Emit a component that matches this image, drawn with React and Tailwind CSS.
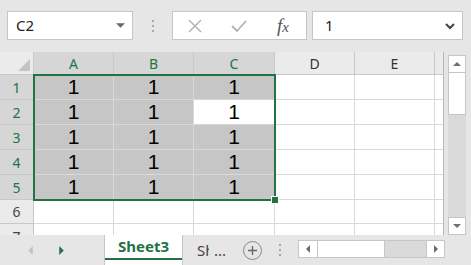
import React from "react";

const cols = [
  { label: "A", w: "w-[80px]", sel: true },
  { label: "B", w: "w-[80px]", sel: true },
  { label: "C", w: "w-[81px]", sel: true },
  { label: "D", w: "w-[80px]", sel: false },
  { label: "E", w: "w-[80px]", sel: false },
  { label: "", w: "w-[9px]", sel: false },
];

const rows = [1, 2, 3, 4, 5, 6, 7];

const Dots = () => (
  <div className="flex flex-col gap-[3px]">
    <div className="w-[2px] h-[2px] bg-[#a6a6a6]" />
    <div className="w-[2px] h-[2px] bg-[#a6a6a6]" />
    <div className="w-[2px] h-[2px] bg-[#a6a6a6]" />
  </div>
);

const Tri = ({ dir, color = "#6e6e6e", size = 8 }) => {
  const pts = {
    up: "0,6 4,2 8,6",
    down: "0,2 8,2 4,6",
    left: "6,0 6,8 2,4",
    right: "2,0 2,8 6,4",
  };
  return (
    <svg width={size} height={size} viewBox="0 0 8 8">
      <polygon points={pts[dir]} fill={color} />
    </svg>
  );
};

const Row = ({ n }) => {
  const selRow = n <= 5;
  const h = n === 6 ? "h-[24px]" : "h-[25px]";
  return (
    <div className={`flex ${h} shrink-0`}>
      <div
        className={`w-[34px] shrink-0 flex items-center justify-center border-r border-b border-[#c8c8c8] text-[14px] ${
          selRow ? "bg-[#d6d6d6] text-[#217346]" : "bg-[#ebebeb] text-[#444]"
        }`}
      >
        {n}
      </div>
      {cols.map((c, i) => {
        const selCell = selRow && c.sel;
        const active = n === 2 && i === 2;
        return (
          <div
            key={i}
            className={`${c.w} shrink-0 flex items-center justify-center border-r border-b border-[#d9d9d9] ${
              selCell && !active ? "bg-[#c6c6c6]" : "bg-white"
            } text-black text-[21px] font-['Liberation_Sans',Arial,sans-serif]`}
          >
            {selCell ? "1" : ""}
          </div>
        );
      })}
    </div>
  );
};

export default function App() {
  return (
    <div className="w-[471px] h-[265px] overflow-hidden bg-[#e6e6e6] font-['Noto_Sans',Arial,sans-serif] flex flex-col">
      {/* formula bar */}
      <div className="h-[52px] shrink-0 flex items-start pt-[11px] pl-[7px]">
        <div className="w-[126px] h-[29px] bg-white border border-[#c6c6c6] flex items-center justify-between pl-[8px] pr-[7px]">
          <span className="text-[15px] text-[#222]">C2</span>
          <Tri dir="down" color="#6a6a6a" size={9} />
        </div>
        <div className="w-[39px] h-[29px] flex items-center justify-center">
          <Dots />
        </div>
        <div className="w-[135px] h-[29px] bg-white border border-[#c6c6c6] flex items-center">
          <div className="w-[44px] flex justify-center">
            <svg width="14" height="14" viewBox="0 0 14 14">
              <path d="M1 1 L13 13 M13 1 L1 13" stroke="#b3b3b3" strokeWidth="1.5" />
            </svg>
          </div>
          <div className="w-[44px] flex justify-center">
            <svg width="16" height="14" viewBox="0 0 16 14">
              <path d="M1 7 L6 12 L15 2" stroke="#b3b3b3" strokeWidth="1.8" fill="none" />
            </svg>
          </div>
          <div className="w-[44px] flex justify-center">
            <span className="font-['Liberation_Serif',serif] italic text-[19px] leading-none text-[#555]">
              f<span className="text-[15px]">x</span>
            </span>
          </div>
        </div>
        <div className="ml-[5px] w-[151px] h-[29px] bg-white border border-[#c6c6c6] flex items-center justify-between pl-[12px] pr-[7px]">
          <span className="text-[15px] text-[#222]">1</span>
          <svg width="10" height="8" viewBox="0 0 10 8">
            <path d="M1 2 L5 6 L9 2" stroke="#444" strokeWidth="2" fill="none" />
          </svg>
        </div>
      </div>

      {/* grid + vertical scrollbar */}
      <div className="flex h-[183px] shrink-0">
        <div className="relative w-[444px] shrink-0 overflow-hidden border-r border-[#b8b8b8]">
          <div className="flex h-[23px]">
            <div className="w-[34px] shrink-0 bg-[#ebebeb] border-r border-b border-[#c8c8c8] flex items-end justify-end p-[3px]">
              <svg width="12" height="12" viewBox="0 0 12 12">
                <polygon points="0,12 12,12 12,0" fill="#c4c4c4" />
              </svg>
            </div>
            {cols.map((c, i) => (
              <div
                key={i}
                className={`${c.w} shrink-0 flex items-center justify-center border-r border-b border-[#c8c8c8] text-[14px] ${
                  c.sel ? "bg-[#d6d6d6] text-[#217346]" : "bg-[#ebebeb] text-[#333]"
                }`}
              >
                {c.label}
              </div>
            ))}
          </div>
          {rows.map((n) => (
            <Row key={n} n={n} />
          ))}
          <div className="absolute left-[33px] top-[22px] w-[243px] h-[127px] border-2 border-[#217346]">
            <div className="absolute -right-[4px] -bottom-[4px] w-[6px] h-[6px] bg-[#217346] outline outline-1 outline-white" />
          </div>
        </div>
        <div className="flex-1 flex flex-col pl-[4px] pr-[5px] pt-[3px]">
          <div className="w-[18px] h-[18px] bg-white border border-[#c6c6c6] flex items-center justify-center">
            <Tri dir="up" />
          </div>
          <div className="w-[18px] h-[42px] bg-white border-x border-b border-[#c6c6c6]" />
          <div className="w-[18px] flex-1 bg-[#dadada]" />
          <div className="w-[18px] h-[18px] bg-white border border-[#c6c6c6] flex items-center justify-center">
            <Tri dir="down" />
          </div>
        </div>
      </div>

      {/* sheet tabs */}
      <div className="h-[30px] shrink-0 flex">
        <div className="w-[104px] shrink-0 flex items-center pl-[26px] gap-[22px]">
          <Tri dir="left" color="#c2c2c2" size={9} />
          <Tri dir="right" color="#217346" size={9} />
        </div>
        <div className="w-[79px] shrink-0 bg-white border-x border-[#c6c6c6] flex flex-col">
          <div className="flex-1 flex items-center justify-center text-[15px] font-bold text-[#217346]">
            Sheet3
          </div>
          <div className="h-[2px] bg-[#217346]" />
          <div className="h-[5px]" />
        </div>
        <div className="w-[60px] shrink-0 flex items-center pl-[14px] text-[15px] text-[#444] whitespace-nowrap">
          <span className="inline-block w-[12px] shrink-0 overflow-hidden">Sheet4</span>
          <span className="shrink-0 ml-[5px] leading-none">...</span>
        </div>
        <div className="w-[19px] shrink-0 flex items-center">
          <div className="w-[19px] h-[19px] rounded-full border border-[#8a8a8a] flex items-center justify-center">
            <svg width="11" height="11" viewBox="0 0 11 11">
              <path d="M5.5 1 V10 M1 5.5 H10" stroke="#666" strokeWidth="1.4" />
            </svg>
          </div>
        </div>
        <div className="w-[36px] shrink-0 flex items-center justify-center">
          <Dots />
        </div>
        <div className="mt-[5px] h-[18px] w-[147px] shrink-0 flex border border-[#c6c6c6] bg-[#dadada]">
          <div className="w-[19px] bg-white border-r border-[#c6c6c6] flex items-center justify-center">
            <Tri dir="left" />
          </div>
          <div className="w-[67px] bg-white border-r border-[#c6c6c6]" />
          <div className="flex-1" />
          <div className="w-[18px] bg-white border-l border-[#c6c6c6] flex items-center justify-center">
            <Tri dir="right" />
          </div>
        </div>
      </div>
    </div>
  );
}
